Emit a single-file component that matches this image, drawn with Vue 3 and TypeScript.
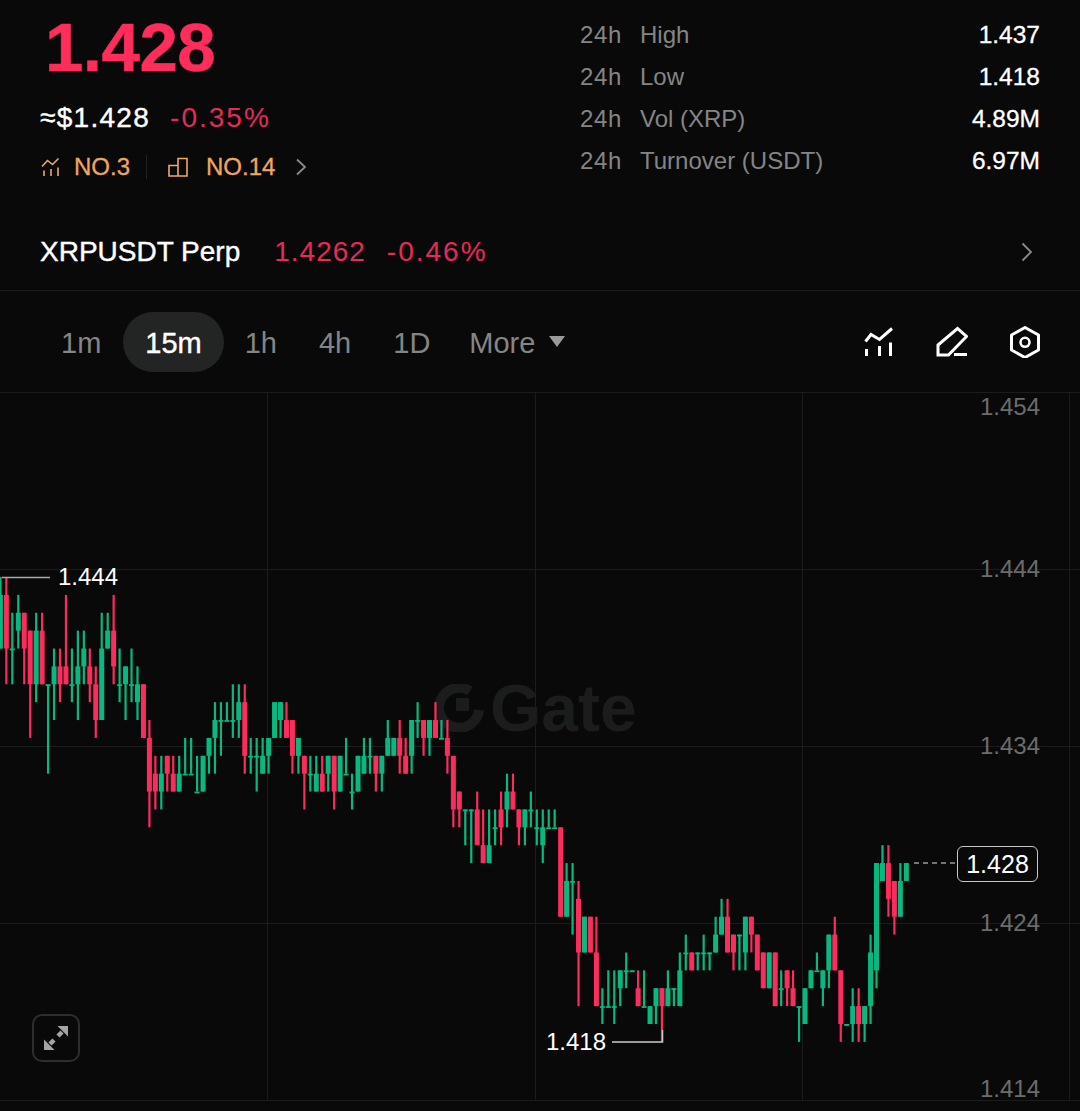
<template>
  <div class="page">
    <!-- ticker head -->
    <section class="head">
      <div class="head-left">
        <div class="big-price">1.428</div>
        <div class="sub-row">
          <span class="usd">≈$1.428</span>
          <span class="red">-0.35%</span>
        </div>
        <div class="rank-row">
          <svg width="20" height="20" viewBox="0 0 20 20" fill="none" stroke="#f0a860" stroke-width="1.6">
            <path d="M1 9.5 6.5 3.5 11.5 7.5 17.5 1.5" />
            <path d="M3 13.5V19M10 12V19M17 10.500V19" />
          </svg>
          <span class="rank-text">NO.3</span>
          <i class="rank-sep"></i>
          <svg width="20" height="20" viewBox="0 0 20 20" fill="none" stroke="#f0a860" stroke-width="1.6">
            <path d="M1 8.500H10V19H1ZM10 1.500H19V19H10Z" />
          </svg>
          <span class="rank-text second">NO.14</span>
          <svg class="chev" width="12" height="18" viewBox="0 0 12 18" fill="none" stroke="#8a8a8a" stroke-width="1.800">
            <path d="M2 1.500 10 9 2 16.500" />
          </svg>
        </div>
      </div>
      <div class="stats">
        <div v-for="s in stats" :key="s.label" class="stat-row">
          <span class="stat-pre">24h</span>
          <span class="stat-label">{{ s.label }}</span>
          <span class="stat-val">{{ s.value }}</span>
        </div>
      </div>
    </section>

    <!-- perp row -->
    <section class="perp">
      <span class="perp-name">XRPUSDT Perp</span>
      <span class="perp-price">1.4262</span>
      <span class="perp-change">-0.46%</span>
      <svg class="perp-chev" width="14" height="20" viewBox="0 0 14 20" fill="none" stroke="#8a8a8a" stroke-width="1.800">
        <path d="M2.500 1.500 11 10 2.500 18.500" />
      </svg>
    </section>

    <!-- intervals -->
    <section class="toolbar">
      <div class="tabs">
        <button v-for="t in tabs" :key="t" class="tab" :class="{ active: t === '15m' }">{{ t }}</button>
        <button class="tab more">More <i class="tri"></i></button>
      </div>
      <div class="tools">
        <svg width="32" height="32" viewBox="0 0 32 32" fill="none" stroke="#fff" stroke-width="3">
          <path d="M2.500 15.500 8 8.500 16.500 13.500 29 2.500" />
          <path d="M3.500 23V30M16.500 20V30M27.500 16.500V30" />
        </svg>
        <svg width="32" height="32" viewBox="0 0 32 32" fill="none" stroke="#fff" stroke-width="3">
          <path d="M2 29V19L21.500 2.500 30.500 10.500 12.500 29Z" />
          <path d="M18 28.500H31" />
        </svg>
        <svg width="32" height="32" viewBox="0 0 32 32" fill="none" stroke="#fff" stroke-width="3">
          <path d="M16 1.500 29.500 9V24L16 31.500 2.500 24V9Z" stroke-linejoin="round" />
          <circle cx="16" cy="16.300" r="4.500" stroke-width="2.600" />
        </svg>
      </div>
    </section>

    <!-- chart canvas -->
    <section class="chart">
      <div class="watermark">
        <svg width="52" height="48" viewBox="0 0 52 48" fill="none">
          <path d="M38 7A20 20 0 1 0 47 26" stroke="#1b1c1c" stroke-width="10" />
          <rect x="24" y="14" width="13" height="13" fill="#1b1c1c" />
        </svg>
        <span>Gate</span>
      </div>
      <svg class="candles" width="1080" height="719" viewBox="0 392 1080 719">
        <path v-for="y in gridY" :key="'h' + y" :d="`M0 ${y}.5H1080`" stroke="#1c1c1c" />
        <path v-for="x in gridX" :key="'v' + x" :d="`M${x}.5 392V1100`" stroke="#1c1c1c" />
        <g v-for="c in candles" :key="c.x" :fill="c.color">
          <rect :x="c.x - 1.1" :y="c.wickY" width="2.200" :height="c.wickH" />
          <rect :x="c.x - 2.500" :y="c.bodyY" width="5" :height="c.bodyH" />
        </g>
        <path d="M2 577.500H50" stroke="#aaa" stroke-width="1.500" />
        <path d="M612 1042H662.500V1030" stroke="#ccc" stroke-width="1.500" fill="none" />
        <path d="M914 863H957" stroke="#9a9a9a" stroke-width="1.500" stroke-dasharray="5 4" />
      </svg>

      <span v-for="a in axis" :key="a.t + a.top" class="axis-label" :style="{ top: a.top + 'px' }">{{ a.t }}</span>
      <span class="mark mark-high">1.444</span>
      <span class="mark mark-low">1.418</span>
      <span class="now">1.428</span>

      <div class="expand">
        <svg width="26" height="26" viewBox="0 0 26 26" fill="#a4a4a4" stroke="#a4a4a4">
          <path d="M25 1H14.500L25 11.500Z" stroke="none" />
          <path d="M1 25H11.500L1 14.500Z" stroke="none" />
          <path d="M19 7 15 11M7 19 11 15" stroke-width="4.500" />
        </svg>
      </div>
    </section>
  </div>
</template>

<script setup lang="ts">
type Candle = [string, number, number, number, number]

const stats = [
  { label: 'High', value: '1.437' },
  { label: 'Low', value: '1.418' },
  { label: 'Vol (XRP)', value: '4.89M' },
  { label: 'Turnover (USDT)', value: '6.97M' }
]
const tabs = ['1m', '15m', '1h', '4h', '1D']
const gridY = [392, 569, 746, 923, 1100]
const gridX = [267, 535, 802, 1069]
const axis = [
  { t: '1.454', top: 0 },
  { t: '1.444', top: 162 },
  { t: '1.434', top: 339 },
  { t: '1.424', top: 516 },
  { t: '1.414', top: 682 }
]

// colour, wick top, wick bottom, body top, body bottom (levels below 1.444)
const raw: Candle[] = [
  ['g',0,4,1,4],['r',0,6,1,4],['g',2,6,4,4],['g',1,4,2,3],['r',2,6,2,4],['r',3,9,3,6],['g',2,7,3,6],['r',2,6,3,6],
  ['g',6,11,6,6],['g',4,8,5,6],['r',4,7,5,6],['r',1,6,5,6],['g',4,7,6,6],['g',3,8,5,6],['g',3,6,4,5],['r',4,7,5,6],
  ['r',5,9,6,8],['g',2,8,4,8],['g',2,4,3,4],['r',1,6,3,5],['g',4,7,6,6],['g',5,8,5,6],['g',4,7,6,6],['g',5,8,6,7],
  ['r',6,9,6,9],['r',8,14,9,12],['r',10,13,11,12],['g',10,13,11,12],['r',10,12,10,11],['r',10,12,11,12],['g',10,12,11,12],
  ['g',9,11,11,11],['g',9,11,11,11],['g',10,12,12,12],['g',10,12,10,12],['g',9,11,9,10],['g',7,11,8,9],['g',7,10,8,8],
  ['g',7,8,8,8],['g',6,9,8,8],['g',6,9,7,8],['r',6,11,7,10],['g',9,11,10,10],['g',9,12,10,10],['g',9,11,10,11],
  ['g',9,11,9,10],['g',7,9,7,9],['g',7,9,7,8],['r',7,9,8,9],['r',8,11,8,10],['g',9,11,9,10],['r',10,13,10,11],
  ['g',10,12,11,11],['g',10,12,11,12],['r',10,12,11,12],['g',10,12,10,11],['r',10,13,10,12],['g',10,12,10,12],
  ['g',9,11,11,11],['g',11,13,12,12],['g',10,12,10,12],['g',9,11,10,11],['g',9,11,10,10],['r',10,12,10,11],
  ['g',10,12,10,11],['g',8,10,9,10],['g',9,10,9,10],['r',8,11,9,10],['r',9,11,10,11],['g',8,11,8,10],['g',7,9,8,8],
  ['r',8,10,8,9],['g',8,10,8,9],['r',7,9,8,9],['g',8,9,9,9],['r',8,11,9,10],['r',10,14,10,13],['r',12,14,12,13],
  ['g',13,15,13,13],['g',13,16,13,13],['r',12,15,13,15],['r',13,16,15,16],['g',13,16,15,16],['g',13,15,14,14],
  ['r',12,15,13,14],['g',11,14,12,13],['r',11,13,12,13],['r',13,15,13,14],['g',13,15,13,14],['g',12,14,13,13],
  ['g',13,15,14,14],['g',13,16,14,15],['g',13,14,14,14],['g',13,14,14,14],['r',14,19,14,19],['g',16,19,17,19],
  ['g',16,20,17,17],['r',17,24,18,21],['g',19,21,19,21],['r',19,21,19,21],['r',19,24,21,24],['g',23,25,24,24],
  ['g',22,24,24,24],['g',22,25,24,24],['g',22,24,22,23],['g',21,23,22,22],['g',22,22,22,22],['r',22,24,23,24],
  ['g',22,24,24,24],['g',24,25,24,25],['g',23,25,23,24],['r',23,26,23,24],['g',22,24,23,24],['g',23,24,23,23],
  ['g',21,24,22,24],['g',20,22,21,21],['r',21,22,21,22],['g',21,22,21,21],['g',20,22,21,21],['g',21,22,21,21],
  ['g',19,21,20,21],['g',18,20,19,20],['r',18,21,19,21],['r',20,22,20,21],['g',20,22,20,20],['g',19,22,19,21],
  ['r',19,21,19,20],['r',20,22,20,22],['r',21,23,21,23],['g',21,23,21,23],['r',21,24,21,24],['g',22,24,23,23],
  ['r',22,24,22,23],['r',22,24,23,24],['g',24,26,24,24],['g',23,25,23,25],['g',22,23,22,23],['g',21,22,22,22],
  ['g',22,24,22,23],['g',20,23,20,22],['r',19,22,20,22],['r',22,26,22,25],['g',25,25,25,25],['g',23,26,24,25],
  ['r',23,26,24,25],['g',24,26,24,25],['g',20,25,21,24],['g',16,23,16,22],['g',15,17,16,17],['r',15,19,16,18],
  ['r',17,20,17,19],['g',16,19,17,19],['g',16,17,16,17]
]

const levelY = (n: number) => 577 + n * 17.88

const candles = raw.map((c, i) => {
  const [col, wt, wb, bt, bb] = c
  return {
    x: 0.4 + i * 5.96,
    color: col === 'r' ? '#fb2d5c' : '#07b981',
    wickY: levelY(wt),
    wickH: Math.max(levelY(wb) - levelY(wt), 1.5),
    bodyY: levelY(bt),
    bodyH: Math.max(levelY(bb) - levelY(bt), 1.8)
  }
})
</script>

<style scoped>
.page {
  width: 1080px;
  height: 1111px;
  overflow: hidden;
  background: #09090a;
  color: #fff;
  font-family: "Liberation Sans", Arial, sans-serif;
}

.head {
  height: 186px;
  padding: 0 40px;
  box-sizing: border-box;
  display: flex;
  justify-content: space-between;
}

.head-left {
  display: flex;
  flex-direction: column;
}

.big-price {
  margin: 6px 0 0 5px;
  height: 84px;
  line-height: 84px;
  font-size: 69px;
  font-weight: 700;
  letter-spacing: -0.5px;
  color: #ff2d5b;
  -webkit-text-stroke: 0.5px #ff2d5b;
}

.sub-row {
  margin-top: 11px;
  height: 34px;
  line-height: 34px;
  display: flex;
  gap: 20px;
  font-size: 28px;
}

.usd {
  -webkit-text-stroke: 0.4px #fff;
  letter-spacing: 1.3px;
}

.red {
  color: #e42c56;
  letter-spacing: 2px;
}

.rank-row {
  margin-top: 15px;
  margin-left: 1px;
  height: 34px;
  display: flex;
  align-items: center;
}

.rank-text {
  margin-left: 13px;
  font-size: 24px;
  -webkit-text-stroke: 0.3px #eea660;
  color: #eea660;
}

.rank-text.second {
  margin-left: 18px;
}

.rank-sep {
  width: 1px;
  height: 24px;
  margin: 0 21px 0 16px;
  background: #222;
}

.chev {
  margin-left: 20px;
}

.stats {
  width: 460px;
  padding-top: 14px;
  display: flex;
  flex-direction: column;
}

.stat-row {
  height: 42px;
  line-height: 42px;
  display: flex;
  font-size: 24px;
  color: #858585;
}

.stat-pre {
  width: 60px;
  letter-spacing: 0.6px;
}

.stat-val {
  margin-left: auto;
  color: #fff;
  -webkit-text-stroke: 0.3px #fff;
  font-size: 24.500px;
}

.perp {
  height: 105px;
  padding: 28px 46px 0 40px;
  box-sizing: border-box;
  border-bottom: 1px solid #1c1c1c;
  display: flex;
  align-items: center;
  font-size: 28px;
}

.perp-name {
  -webkit-text-stroke: 0.4px #fff;
}

.perp-price {
  margin-left: 34px;
  color: #e42c56;
  letter-spacing: 1px;
}

.perp-change {
  margin-left: 21px;
  color: #e42c56;
  letter-spacing: 2px;
}

.perp-chev {
  margin-left: auto;
}

.toolbar {
  height: 101px;
  padding: 0 39px 0 40px;
  box-sizing: border-box;
  display: flex;
  align-items: center;
  justify-content: space-between;
}

.tabs {
  display: flex;
  align-items: center;
}

.tab {
  height: 60px;
  padding: 3px 21px 0;
  border: 0;
  border-radius: 30px;
  background: none;
  color: #858585;
  font: 400 29px "Liberation Sans", Arial, sans-serif;
}

.tab.active {
  margin-left: 1px;
  padding: 3px 22px 0;
  background: #232525;
  color: #fff;
  -webkit-text-stroke: 0.4px #fff;
}

.more {
  display: flex;
  align-items: center;
  gap: 14px;
  padding-left: 18px;
}

.tri {
  width: 0;
  height: 0;
  border-left: 8px solid transparent;
  border-right: 8px solid transparent;
  border-top: 11px solid #9a9a9a;
  margin-top: -4px;
}

.tools {
  display: flex;
  gap: 41px;
}

.chart {
  position: relative;
  height: 719px;
}

.candles {
  position: absolute;
  left: 0;
  top: 0;
}

.watermark {
  position: absolute;
  left: 432px;
  top: 288px;
  display: flex;
  align-items: center;
  gap: 6px;
  font-size: 66px;
  line-height: 56px;
  font-weight: 700;
  color: #1b1c1c;
}

.axis-label {
  position: absolute;
  right: 40px;
  font-size: 24px;
  line-height: 30px;
  color: #6c6c6c;
}

.mark {
  position: absolute;
  font-size: 24px;
  line-height: 30px;
  color: #fff;
}

.mark-high {
  left: 58px;
  top: 170px;
}

.mark-low {
  left: 546px;
  top: 635px;
}

.now {
  position: absolute;
  left: 957px;
  top: 454px;
  width: 81px;
  height: 36px;
  box-sizing: border-box;
  border: 1.5px solid #c8c8c8;
  border-radius: 6px;
  background: #09090a;
  font-size: 25px;
  line-height: 35px;
  text-align: center;
}

.expand {
  position: absolute;
  left: 32px;
  top: 622px;
  width: 48px;
  height: 48px;
  box-sizing: border-box;
  border: 2px solid #2e2e2e;
  border-radius: 10px;
  display: flex;
  align-items: center;
  justify-content: center;
}
</style>

<style>
html, body {
  background: #09090a;
}
</style>
